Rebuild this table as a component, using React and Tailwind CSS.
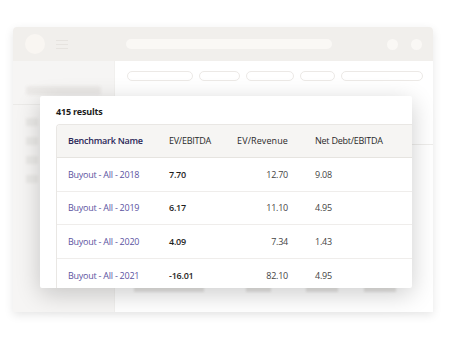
import React from "react";

const rows = [
  ["Buyout - All - 2018", "7.70", "12.70", "9.08"],
  ["Buyout - All - 2019", "6.17", "11.10", "4.95"],
  ["Buyout - All - 2020", "4.09", "7.34", "1.43"],
  ["Buyout - All - 2021", "-16.01", "82.10", "4.95"],
];

export default function App() {
  return (
    <div className="w-[474px] h-[345px] bg-white relative overflow-hidden" style={{ fontFamily: '"Open Sans", "Noto Sans", sans-serif' }}>
      {/* background window */}
      <div className="absolute left-[13px] top-[27px] w-[420px] h-[285px] rounded-t-[4px] bg-white shadow-[0_3px_10px_rgba(0,0,0,0.10)] flex flex-col overflow-hidden">
        <div className="h-[34px] bg-[#f1efec] flex items-center pl-[12px] pr-[8px] shrink-0">
          <div className="w-[20px] h-[20px] rounded-full bg-[#f9f6f2]" />
          <div className="ml-[11px] flex flex-col gap-[3px]">
            <div className="w-[12px] h-[1px] bg-[#e6e3df]" />
            <div className="w-[12px] h-[1px] bg-[#e6e3df]" />
            <div className="w-[12px] h-[1px] bg-[#e6e3df]" />
          </div>
          <div className="ml-[58px] w-[206px] h-[10px] rounded-full bg-[#faf8f5]" />
          <div className="ml-auto flex gap-[13px] mr-[3px]">
            <div className="w-[11px] h-[11px] rounded-full bg-[#faf8f5]" />
            <div className="w-[11px] h-[11px] rounded-full bg-[#faf8f5]" />
          </div>
        </div>
        <div className="flex flex-1">
          <div className="w-[101px] bg-[#f6f5f4] flex flex-col pt-[25px] px-[13px]">
            <div className="h-[9px] w-[75px] rounded-[3px] bg-[#ebe9e7] blur-[1.5px]" />
            <div className="mt-[9px] -mx-[13px] h-[1px] bg-[#ebeae8]" />
            <div className="mt-[13px] flex flex-col gap-[11px]">
              <div className="h-[8px] w-[12px] bg-[#ebeae8] blur-[1px]" />
              <div className="h-[8px] w-[12px] bg-[#ebeae8] blur-[1px]" />
              <div className="h-[8px] w-[12px] bg-[#ebeae8] blur-[1px]" />
              <div className="h-[8px] w-[12px] bg-[#ebeae8] blur-[1px]" />
            </div>
          </div>
          <div className="flex-1 flex flex-col border-l border-[#f1f0ee]">
            <div className="flex gap-[6px] pl-[12px] pt-[10px]">
              <div className="w-[66px] h-[10px] rounded-full border border-[#ece9e6]" />
              <div className="w-[41px] h-[10px] rounded-full border border-[#ece9e6]" />
              <div className="w-[48px] h-[10px] rounded-full border border-[#ece9e6]" />
              <div className="w-[35px] h-[10px] rounded-full border border-[#ece9e6]" />
              <div className="w-[82px] h-[10px] rounded-full border border-[#ece9e6]" />
            </div>
            <div className="mt-[63px] h-[1px] bg-[#eeedeb]" />
            <div className="mt-[141px] flex items-start pl-[19px]">
              <div className="w-[70px] h-[6px] bg-[#e8e7e5] blur-[1px]" />
              <div className="ml-[42px] w-[25px] h-[6px] bg-[#e8e7e5] blur-[1px]" />
              <div className="ml-[35px] w-[32px] h-[6px] bg-[#e8e7e5] blur-[1px]" />
              <div className="ml-[26px] w-[32px] h-[6px] bg-[#e8e7e5] blur-[1px]" />
            </div>
          </div>
        </div>
      </div>

      {/* results card */}
      <div className="absolute left-[40px] top-[96px] w-[372px] h-[192px] bg-white rounded-[2px] shadow-[0_6px_24px_rgba(0,0,0,0.20)] overflow-hidden tracking-[-0.25px]">
        <div className="pl-[16px] pt-[9px] h-[28px] text-[9px] font-bold text-[#1c1c1c] leading-[14px] tracking-[-0.2px]">415 results</div>
        <div className="ml-[16px] border-l border-t border-[#e9e7e4] rounded-tl-[4px] overflow-hidden">
          <div className="grid grid-cols-[100px_72px_71px_1fr] h-[33px] items-center bg-[#f6f5f3] border-b border-[#e6e4e0] text-[9px]">
            <div className="pl-[11px] font-semibold text-[#2b2858]">Benchmark Name</div>
            <div className="pl-[12px] text-[#2a2a2a]">EV/EBITDA</div>
            <div className="pr-[12px] text-right text-[#2a2a2a] tracking-[0.1px]">EV/Revenue</div>
            <div className="pl-[15px] text-[#2a2a2a]">Net Debt/EBITDA</div>
          </div>
          {rows.map((r, i) => (
            <div key={i} className={`grid grid-cols-[100px_72px_71px_1fr] h-[33.5px] items-center text-[9px] ${i < rows.length - 1 ? "border-b border-[#efedeb]" : ""}`}>
              <div className="pl-[11px] text-[#5c539f]">{r[0]}</div>
              <div className="pl-[12px] font-semibold text-[#1e1e1e]">{r[1]}</div>
              <div className="pr-[12px] text-right text-[#444]">{r[2]}</div>
              <div className="pl-[15px] text-[#444]">{r[3]}</div>
            </div>
          ))}
        </div>
      </div>
    </div>
  );
}
